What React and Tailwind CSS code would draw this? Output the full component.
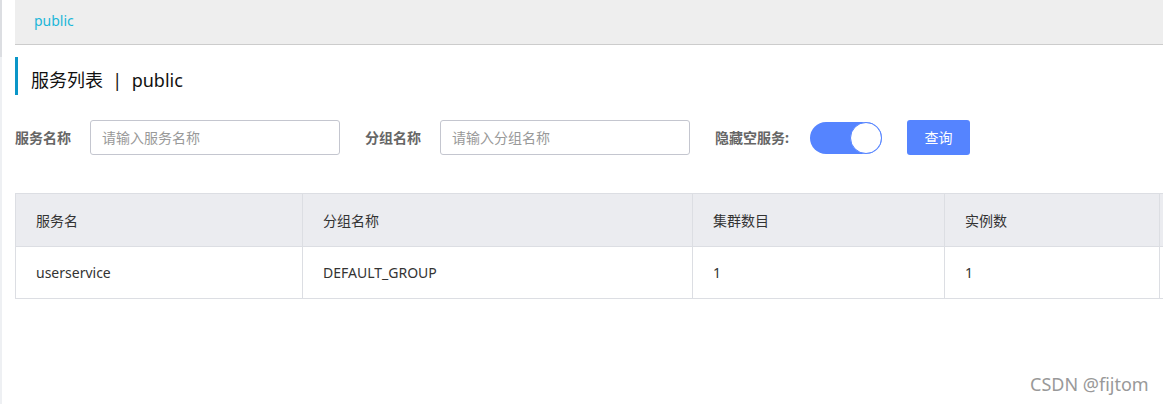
import React, { useState } from "react";

const font = { fontFamily: '"Noto Sans", "Noto Sans CJK SC", sans-serif' };

const columns = [
  { title: "服务名", width: "w-[287px]" },
  { title: "分组名称", width: "w-[390px]" },
  { title: "集群数目", width: "w-[252px]" },
  { title: "实例数", width: "w-[215px]" },
  { title: "", width: "w-[200px]" },
];

const rows = [["userservice", "DEFAULT_GROUP", "1", "1", ""]];

const App = () => {
  const [hideEmpty, setHideEmpty] = useState(true);

  return (
    <div
      className="relative flex h-[404px] w-[1163px] overflow-hidden bg-white font-['Noto_Sans','Noto_Sans_CJK_SC',sans-serif]"
      style={font}
    >
      {/* page scroll strip */}
      <div className="flex w-[2px] shrink-0 flex-col">
        <div className="h-[57px] bg-[#dcdee2]" />
        <div className="flex-1 bg-[#eef0f3]" />
      </div>

      <div className="flex min-w-0 flex-1 flex-col pl-[13px]">
        <div className="flex h-[45px] shrink-0 items-center border-b border-[#cccccc] bg-[#eeeeee] pb-[3px] pl-[19px]">
          <span className="text-[14px] leading-none text-[#1bb6d8]">public</span>
        </div>

        <div className="mt-[12px] flex h-[38px] items-center border-l-[3px] border-[#0a96c8] pl-[13px] pt-[8px]">
          <span className="text-[18px] text-[#111]">服务列表 &nbsp;|&nbsp; public</span>
        </div>

        <div className="mt-[25px] flex h-[35px] items-center">
          <span className="w-[75px] text-[14px] font-bold text-[#666]">服务名称</span>
          <input
            className="h-[35px] w-[250px] rounded-[3px] border border-[#c4c6cf] px-[11px] text-[14px] outline-none placeholder:text-[#999]"
            placeholder="请输入服务名称"
          />
          <span className="ml-[25px] w-[75px] text-[14px] font-bold text-[#666]">分组名称</span>
          <input
            className="h-[35px] w-[250px] rounded-[3px] border border-[#c4c6cf] px-[11px] text-[14px] outline-none placeholder:text-[#999]"
            placeholder="请输入分组名称"
          />
          <span className="ml-[25px] w-[95px] text-[14px] font-bold text-[#666]">隐藏空服务:</span>
          <button
            onClick={() => setHideEmpty(!hideEmpty)}
            className={`flex h-[32px] w-[72px] items-center rounded-full p-0 ${
              hideEmpty ? "justify-end bg-[#5584ff]" : "justify-start bg-[#c4c6cf]"
            }`}
          >
            <span className="h-[32px] w-[32px] rounded-full border border-[#5584ff] bg-white" />
          </button>
          <button className="ml-[25px] h-[35px] w-[63px] rounded-[3px] bg-[#5584ff] text-[14px] text-white">
            查询
          </button>
        </div>

        <table className="mt-[38px] w-[1344px] table-fixed border-collapse text-[14px] text-[#333]">
          <thead>
            <tr className="h-[53px] bg-[#ebecf0]">
              {columns.map((c, i) => (
                <th
                  key={i}
                  className={`${c.width} border border-[#dcdee3] px-[20px] text-left font-normal`}
                >
                  {c.title}
                </th>
              ))}
            </tr>
          </thead>
          <tbody>
            {rows.map((r) => (
              <tr key={r[0]} className="h-[52px]">
                {r.map((v, i) => (
                  <td key={i} className="border border-[#dcdee3] px-[20px]">
                    {v}
                  </td>
                ))}
              </tr>
            ))}
          </tbody>
        </table>
      </div>

      <span className="absolute left-[1030px] top-[371px] text-[18px] text-[#999]">CSDN @fijtom</span>
    </div>
  );
};

export default App;
